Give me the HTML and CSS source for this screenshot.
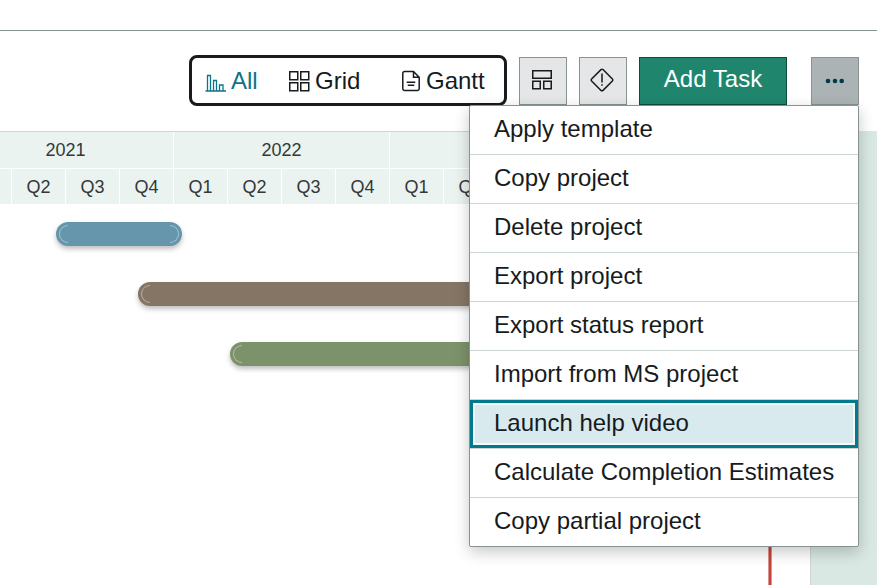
FILE: index.html
```html
<!doctype html>
<html lang="en">
	<head>

		<meta charset="utf-8">
		<meta name="viewport" content="width=device-width, initial-scale=1">

		<title>Project timeline</title>

		<link rel="stylesheet" href="styles.css">

	</head>
	<body>

		<header class="topbar"></header>

		<div class="toolbar">

			<div class="views">
				<button class="view view-all active">
					<svg class="icon" width="22" height="22" viewBox="0 0 22 22"><path d="M0.5 21H21M2.5 20.5V5.5H5.5V20.5M8.5 20.5V10.5H11.5V20.5M14.5 20.5V15H18V20.5"/></svg>
					All
				</button>
				<button class="view view-grid">
					<svg class="icon" width="22" height="22" viewBox="0 0 22 22"><path d="M1.75 1.75h8v8h-8zM12.75 1.75h8v8h-8zM1.75 12.75h8v8h-8zM12.75 12.75h8v8h-8z"/></svg>
					Grid
				</button>
				<button class="view view-gantt">
					<svg class="icon" width="20" height="22" viewBox="0 0 20 22"><path d="M12.5 1.5H3.5a1.7 1.7 0 0 0-1.7 1.7v15.6a1.7 1.7 0 0 0 1.7 1.7h13a1.7 1.7 0 0 0 1.7-1.7V7.2zM12.5 1.5V7.2H18.2M5.7 12.2h8.6M6.7 15.2h6.6"/></svg>
					Gantt
				</button>
			</div>

			<button class="square" aria-label="Layout">
				<svg class="icon" width="22" height="22" viewBox="0 0 22 22"><path d="M1.75 1.75h18.5v7.5h-18.5zM1.75 12.25h7.5v7.5h-7.5zM12.75 12.25h7.5v7.5h-7.5z"/></svg>
			</button>
			<button class="square" aria-label="Alerts">
				<svg class="icon" width="24" height="24" viewBox="0 0 24 24"><path d="M11 1.6a1.4 1.4 0 0 1 2 0L22.4 11a1.4 1.4 0 0 1 0 2L13 22.4a1.4 1.4 0 0 1-2 0L1.6 13a1.4 1.4 0 0 1 0-2zM12 5.5v9M12 16.2v1.6"/></svg>
			</button>

			<button class="add">Add Task</button>

			<div class="more">
				<button class="square pressed" aria-label="More">
					<svg width="20" height="6" viewBox="0 0 20 6"><circle cx="3" cy="3" r="2.3"/><circle cx="10" cy="3" r="2.3"/><circle cx="16.7" cy="3" r="2.3"/></svg>
				</button>

				<ul class="menu">
					<li class="item">Apply template</li>
					<li class="item">Copy project</li>
					<li class="item">Delete project</li>
					<li class="item">Export project</li>
					<li class="item">Export status report</li>
					<li class="item">Import from MS project</li>
					<li class="item focused">Launch help video</li>
					<li class="item">Calculate Completion Estimates</li>
					<li class="item">Copy partial project</li>
				</ul>
			</div>

		</div>

		<main class="chart">
			<div class="timeline">

				<div class="scale years">
					<div class="year">2021</div>
					<div class="year">2022</div>
					<div class="year"></div>
					<div class="year"></div>
				</div>
				<div class="scale quarters">
					<div class="quarter"></div>
					<div class="quarter">Q2</div>
					<div class="quarter">Q3</div>
					<div class="quarter">Q4</div>
					<div class="quarter">Q1</div>
					<div class="quarter">Q2</div>
					<div class="quarter">Q3</div>
					<div class="quarter">Q4</div>
					<div class="quarter">Q1</div>
					<div class="quarter">Q2</div>
				</div>

				<div class="row"><div class="bar blue"></div></div>
				<div class="row"><div class="bar brown"></div></div>
				<div class="row"><div class="bar green"></div></div>

				<div class="today"></div>

			</div>
			<aside class="side"></aside>
		</main>

	</body>
</html>
```

FILE: styles.css
```css
:root
{
	--text: #161b1d;
	--teal: #007a8c;
	--border: #869391;
	--line: #cdd5d4;
	--head: #eaf3f0;
}

/* -------------------------------------------------- */

*, *::before, *::after { box-sizing: border-box; }

body
{
	margin: 0;
	height: 100vh;
	overflow: hidden;

	display: flex;
	flex-direction: column;

	font-family: "Liberation Sans", Arial, sans-serif;
	font-size: 24px;

	background: white;
	color: var( --text );
}

button
{
	padding: 0;
	border: none;
	background: none;
	font: inherit;
	color: inherit;
}

.icon
{
	fill: none;
	stroke: currentColor;
	stroke-width: 1.5;
}

/* -------------------------------------------------- */

.topbar
{
	flex: none;
	height: 31px;
	border-bottom: 1px solid var( --border );
}

.toolbar
{
	flex: none;
	display: flex;
	justify-content: flex-end;
	align-items: center;
	gap: 12px;

	height: 100px;
	padding-right: 18px;
}

.views
{
	display: flex;
	width: 318px;
	height: 51px;
	margin-bottom: 1px;
	padding-left: 13px;

	border: 3px solid var( --text );
	border-radius: 8px;
}

.view
{
	display: flex;
	align-items: center;
	gap: 5px;
}

.view-all { width: 83px; gap: 4px; }
.view-grid { width: 113px; }

.view.active { color: #0c7488; }
.view-all .icon { stroke-width: 1.3; }
.view-gantt .icon { margin-top: 1px; }

/* -------------------------------------------------- */

.square
{
	display: flex;
	align-items: center;
	justify-content: center;

	width: 48px;
	height: 48px;

	background: #e4e6e7;
	border: 1px solid var( --border );
}

.square .icon { margin: -2px 2px 0 0; }

.square.pressed
{
	background: #abb3b5;
	fill: #003a46;
}

.add
{
	width: 148px;
	height: 48px;
	padding-bottom: 4px;

	background: #1f866d;
	color: white;
	border: 1px solid #0f4a3c;
}

.more
{
	position: relative;
	margin-left: 12px;
}

/* -------------------------------------------------- */

.menu
{
	position: absolute;
	top: 48px;
	right: 0;
	z-index: 2;

	width: 390px;
	margin: 0;
	padding: 0;
	list-style: none;

	background: white;
	border: 1px solid var( --border );
	border-radius: 2px;
	box-shadow: 0 5px 15px rgba( 0,0,0 , 0.22 );
}

.item
{
	height: 49px;
	padding-left: 24px;

	line-height: 46px;
	white-space: nowrap;

	border-bottom: 1px solid var( --line );
}

.item:last-child
{
	height: 48px;
	border-bottom: none;
}

.item.focused
{
	background: #d9eaee;
	box-shadow: inset 0 0 0 3px var( --teal ) , inset 0 0 0 5px #f3f9fa;
	background-clip: padding-box;
}

/* -------------------------------------------------- */

.chart
{
	flex: 1;
	display: flex;
	min-height: 0;
}

.timeline
{
	position: relative;
	width: 810px;
	overflow: hidden;
	border-top: 1px solid var( --line );
}

.side
{
	flex: 1;
	background: #d9e8e2;
	border-left: 1px solid var( --line );
}

.scale
{
	display: flex;
	width: 864px;
	margin-left: -42px;

	font-size: 18px;
	line-height: 36px;
	text-align: center;

	background: var( --head );
	color: #333939;
}

.years
{
	height: 37px;
	border-bottom: 1px solid white;
}

.quarters { height: 35px; }

.year,
.quarter
{
	border-right: 1px solid white;
}

.year { width: 216px; }
.quarter { width: 54px; }

/* -------------------------------------------------- */

.row
{
	height: 60px;
	padding-top: 18px;
}

.bar
{
	position: relative;
	height: 24px;
	border-radius: 12px;
	box-shadow: 0 3px 5px rgba( 0,0,0 , 0.25 );
}

/* Resize handles at the rounded ends */

.bar::before,
.bar::after
{
	content: "";
	position: absolute;
	top: 3px;
	width: 9px;
	height: 18px;
	border: 1px solid rgba( 255,255,255 , 0.4 );
}

.bar::before
{
	left: 3px;
	border-right: none;
	border-radius: 9px 0 0 9px;
}

.bar::after
{
	right: 3px;
	border-left: none;
	border-radius: 0 9px 9px 0;
}

.blue { width: 126px; margin-left: 56.3px; background: #6696ac; }
.brown { width: 480px; margin-left: 138px; background: #857565; }
.green { width: 460px; margin-left: 230px; background: #7c926b; }

/* -------------------------------------------------- */

.today
{
	position: absolute;
	top: 72px;
	bottom: 0;
	left: 768px;
	width: 4px;
	background: #c9423c;
	border: solid #dc9490;
	border-width: 0 1px;
}
```
